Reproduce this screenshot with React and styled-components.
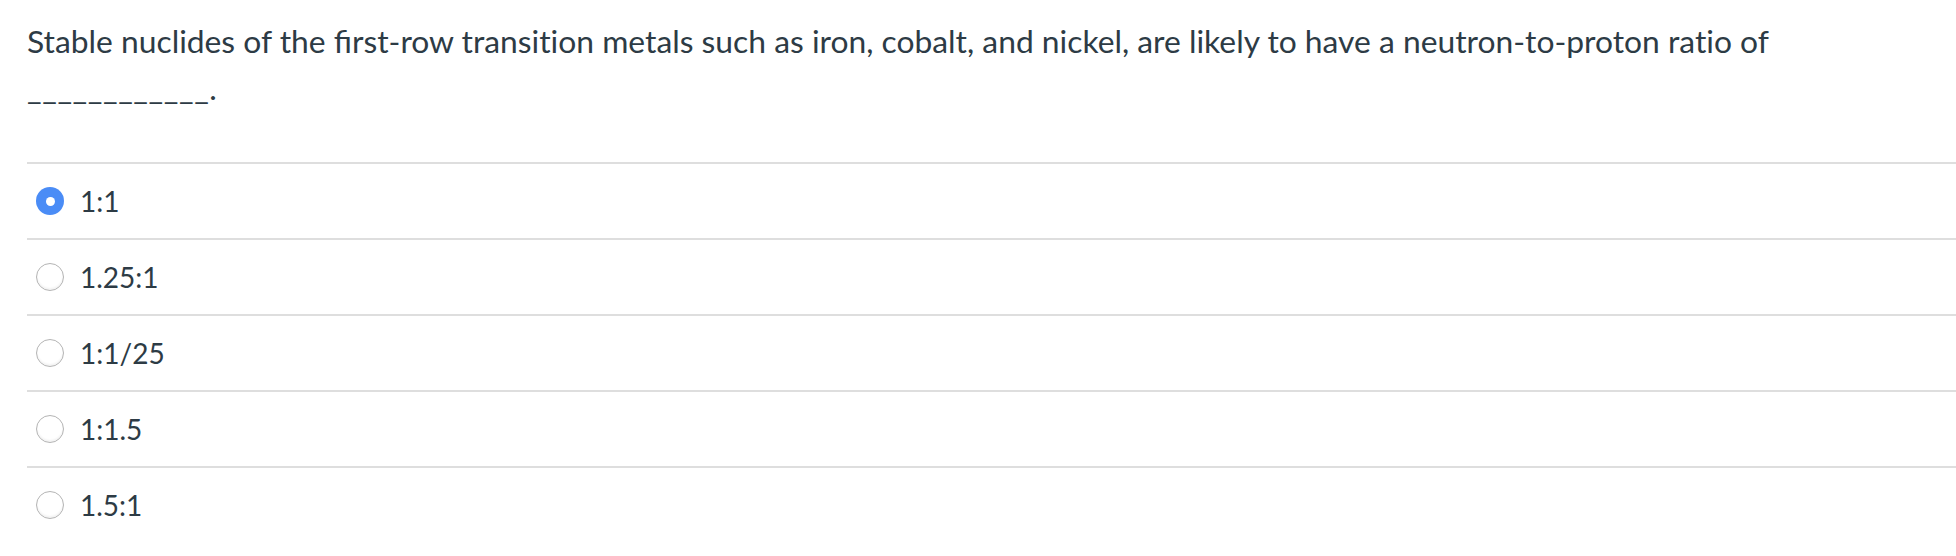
import React from 'react';
import styled, { createGlobalStyle } from 'styled-components';

const GlobalStyle = createGlobalStyle`
  body {
    margin: 0;
    background: #fff;
    font-family: Lato, "Open Sans", sans-serif;
    color: #2d3b45;
  }
`;

const Container = styled.div`
  padding: 18px 0 0 27px;
`;

const Question = styled.div`
  font-size: 31.8px;
  line-height: 47px;
  margin: 0 0 50px 0;
  font-variant-ligatures: no-common-ligatures;
`;

const Blank = styled.span`
  letter-spacing: 0.6px;
`;

const Answers = styled.div`
  display: flex;
  flex-direction: column;
`;

const Row = styled.label`
  display: flex;
  align-items: center;
  height: 74px;
  border-top: 2px solid #dedede;
  padding-left: 9px;
  font-size: 28px;
`;

const Radio = styled.span`
  box-sizing: border-box;
  width: 28px;
  height: 28px;
  border-radius: 50%;
  margin-right: 16px;
  display: flex;
  align-items: center;
  justify-content: center;
  background: ${p => (p.checked ? '#4a8cf6' : '#fff')};
  border: ${p => (p.checked ? 'none' : '1.5px solid #b4b4b4')};
  box-shadow: ${p => (p.checked ? 'none' : 'inset 0 -2px 2px rgba(0,0,0,0.05)')};

  &::after {
    content: '';
    display: ${p => (p.checked ? 'block' : 'none')};
    width: 9px;
    height: 9px;
    border-radius: 50%;
    background: #fff;
  }
`;

const answers = ['1:1', '1.25:1', '1:1/25', '1:1.5', '1.5:1'];

export default function App() {
  return (
    <>
      <GlobalStyle />
      <Container>
        <Question>
          Stable nuclides of the ﬁrst-row transition metals such as iron, cobalt, and nickel, are likely to have a neutron-to-proton ratio of
          <br />
          <Blank>____________</Blank>.
        </Question>
        <Answers>
          {answers.map((a, i) => (
            <Row key={a}>
              <Radio checked={i === 0} />
              {a}
            </Row>
          ))}
        </Answers>
      </Container>
    </>
  );
}
